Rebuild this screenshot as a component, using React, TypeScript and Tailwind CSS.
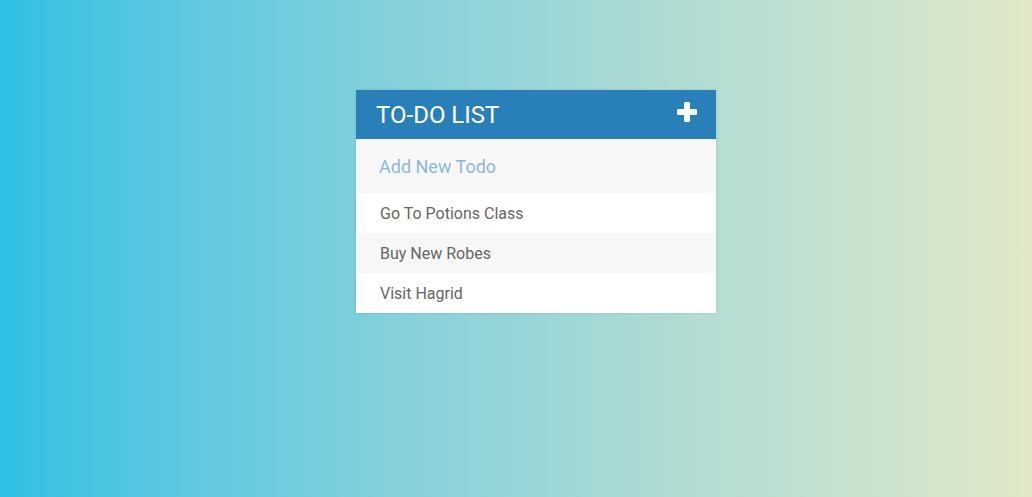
import { useState } from 'react';

const initialTodos = ['Go To Potions Class', 'Buy New Robes', 'Visit Hagrid'];

export default function App() {
  const [todos, setTodos] = useState<string[]>(initialTodos);
  const [text, setText] = useState('');

  const addTodo = (e: React.KeyboardEvent<HTMLInputElement>) => {
    if (e.key === 'Enter' && text.trim()) {
      setTodos(prev => [...prev, text.trim()]);
      setText('');
    }
  };

  return (
    <div className="min-h-[497px] w-full bg-gradient-to-r from-[#2BC0E4] to-[#e0e8c8] font-['Roboto',sans-serif] pt-[90px] pl-10">
      {/* Card */}
      <div className="mx-auto w-[360px] bg-white shadow-[0_0_3px_rgba(0,0,0,0.1)]">
        {/* Header */}
        <div className="flex h-[49px] items-center justify-between bg-[#2980b9] px-5 text-white">
          <h1 className="text-[24px] font-normal uppercase leading-none">To-do List</h1>
          <svg width="20" height="20" viewBox="0 0 20 20" className="mr-[-1px] mb-[5px]">
            <rect x="7" y="0" width="6" height="20" rx="1.2" fill="white" />
            <rect x="0" y="7" width="20" height="6" rx="1.2" fill="white" />
          </svg>
        </div>

        {/* Input */}
        <input
          type="text"
          value={text}
          onChange={e => setText(e.target.value)}
          onKeyDown={addTodo}
          placeholder="Add New Todo"
          className="block h-[54px] w-full border-[3px] border-transparent bg-[#f7f7f7] pl-5 pr-[13px] text-[18px] text-[#2980b9] placeholder:text-[#8cb9d9] outline-none focus:border-[#2980b9] focus:bg-white"
        />

        {/* List */}
        <ul>
          {todos.map((todo, i) => (
            <li
              key={i}
              className={`h-10 pl-6 pt-px text-[16px] leading-10 text-[#666] ${
                i % 2 === 1 ? 'bg-[#f7f7f7]' : 'bg-white'
              }`}
            >
              {todo}
            </li>
          ))}
        </ul>
      </div>
    </div>
  );
}
